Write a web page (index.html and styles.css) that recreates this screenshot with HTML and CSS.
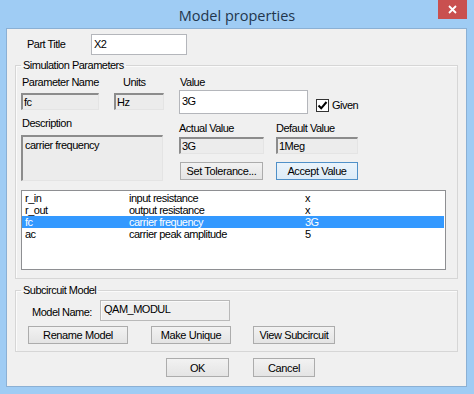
FILE: index.html
```html
<!DOCTYPE html>
<html>
<head>
<meta charset="utf-8">
<title>Model properties</title>
<link rel="stylesheet" href="styles.css">
</head>
<body>
<div class="titlebar">
  <span class="title">Model properties</span>
  <div class="close"><svg width="9" height="9" viewBox="0 0 9 9"><path d="M1 1 L8 8 M8 1 L1 8" stroke="#fff" stroke-width="1.8" fill="none"/></svg></div>
</div>
<div class="dialog">
  <div class="row-title">
    <span class="lbl-part">Part Title</span>
    <div class="edit part">X2</div>
  </div>
  <fieldset class="group sim">
    <legend>Simulation Parameters</legend>
    <div class="params">
      <div class="left">
        <div class="lab-row"><span class="l-pname">Parameter Name</span><span class="l-units">Units</span></div>
        <div class="field-row"><div class="sunk fc">fc</div><div class="sunk hz">Hz</div></div>
        <div class="l-desc">Description</div>
        <div class="sunk desc">carrier frequency</div>
      </div>
      <div class="right">
        <div class="l-value">Value</div>
        <div class="value-row">
          <div class="edit value">3G</div>
          <label class="given"><span class="check"><svg width="11" height="11" viewBox="0 0 11 11"><path d="M1.5 5.5 L4.2 8.3 L9.5 2" stroke="#000" stroke-width="2" fill="none"/></svg></span>Given</label>
        </div>
        <div class="pair labels"><span>Actual Value</span><span>Default Value</span></div>
        <div class="pair fields"><div class="sunk">3G</div><div class="sunk">1Meg</div></div>
        <div class="pair btns"><button class="btn tol">Set Tolerance...</button><button class="btn default">Accept Value</button></div>
      </div>
    </div>
    <div class="list">
      <div class="lrow"><span>r_in</span><span>input resistance</span><span>x</span></div>
      <div class="lrow"><span>r_out</span><span>output resistance</span><span>x</span></div>
      <div class="lrow sel"><span>fc</span><span>carrier frequency</span><span>3G</span></div>
      <div class="lrow"><span>ac</span><span>carrier peak amplitude</span><span>5</span></div>
    </div>
  </fieldset>
  <fieldset class="group sub">
    <legend>Subcircuit Model</legend>
    <div class="model-row">
      <span class="lbl-model">Model Name:</span>
      <div class="mname">QAM_MODUL</div>
    </div>
    <div class="sub-btns">
      <button class="btn rename">Rename Model</button>
      <button class="btn unique">Make Unique</button>
      <button class="btn view">View Subcircuit</button>
    </div>
  </fieldset>
  <div class="ok-row">
    <button class="btn ok">OK</button>
    <button class="btn cancel">Cancel</button>
  </div>
</div>
</body>
</html>
```

FILE: styles.css
```css
* { box-sizing: border-box; }
html, body { margin: 0; padding: 0; }
body {
  width: 474px;
  height: 394px;
  overflow: hidden;
  background: #9fccf4;
  font-family: "Liberation Sans", Arial, sans-serif;
  font-size: 11px;
  line-height: 13px;
  letter-spacing: -0.5px;
  color: #000;
}
.titlebar {
  height: 29px;
  position: relative;
  display: flex;
  justify-content: center;
  align-items: center;
}
.title {
  font-family: "Open Sans", "Noto Sans", sans-serif;
  font-size: 14.5px;
  letter-spacing: 0;
  color: #22364d;
  padding-top: 1px;
}
.close {
  position: absolute;
  top: 0;
  right: 7px;
  width: 29px;
  height: 19px;
  background: #c9504f;
  display: flex;
  align-items: center;
  justify-content: center;
}
.close svg { display: block; }
.dialog {
  margin-left: 7px;
  width: 459px;
  height: 357px;
  background: #f0f0f0;
  box-shadow: 0 0 0 1px #8bb0d4;
  padding-top: 5px;
}
.row-title { display: flex; height: 21px; align-items: center; }
.lbl-part { width: 84px; padding-left: 20px; }
.edit {
  background: #fff;
  border: 1px solid #b4b6bb;
  padding: 3px 2px 0;
  line-height: 13px;
}
.edit.part { width: 96px; height: 21px; }
.group {
  margin: 0 0 0 8px;
  width: 443px;
  min-width: 0;
  border: 1px solid #d6d6d6;
  box-shadow: inset 1px 1px 0 #fbfbfb;
  padding: 0 5px;
}
.group legend {
  padding: 0 2px;
  margin: 0;
  line-height: 13px;
}
.sim { margin-top: 4px; padding-top: 4px; padding-bottom: 8px; }
.params { display: flex; }
.left { width: 158px; flex: 0 0 158px; }
.lab-row, .field-row { display: grid; grid-template-columns: 93px 50px; }
.l-pname { padding-left: 1px; }
.l-units { padding-left: 9px; }
.field-row { margin-top: 4px; }
.sunk {
  background: #ececec;
  border-style: solid;
  border-width: 2px 1px 1px 2px;
  border-color: #8c8c8c #e4e4e4 #e4e4e4 #8c8c8c;
  height: 17px;
  padding: 1px 0 0 1px;
  line-height: 13px;
  white-space: nowrap;
}
.fc { width: 78px; }
.hz { width: 50px; }
.l-desc { margin-top: 7px; padding-left: 1px; }
.desc { margin-top: 5px; width: 142px; height: 46px; padding: 2px 0 0 2px; }
.right { flex: 1 1 auto; min-width: 0; }
.l-value { padding-left: 1px; }
.value-row { display: flex; margin-top: 1px; }
.edit.value { width: 129px; height: 24px; padding-top: 4px; }
.given { display: flex; align-items: center; margin-left: 8px; margin-top: 9px; height: 13px; gap: 3px; }
.check {
  width: 13px;
  height: 13px;
  background: #fff;
  border: 1px solid #333;
  display: flex;
  align-items: center;
  justify-content: center;
}
.check svg { display: block; }
.pair { display: grid; grid-template-columns: 85px 82px; column-gap: 12px; }
.pair.labels { margin-top: 8px; }
.pair.fields { margin-top: 2px; }
.pair.btns { margin-top: 8px; }
.btn {
  font-family: inherit;
  font-size: 11px;
  letter-spacing: -0.4px;
  color: #000;
  height: 18px;
  padding: 0;
  margin: 0;
  border: 1px solid #acacac;
  background: linear-gradient(#f2f2f2, #e4e4e4);
  line-height: 14px;
  white-space: nowrap;
}
.btn.tol { margin-left: 1px; width: 83px; }
.btn.default {
  width: 82px;
  border-color: #4f90c8;
  background: linear-gradient(#eaf3fb, #dcebf8);
}
.list {
  margin-top: 9px;
  width: 425px;
  height: 80px;
  background: #fff;
  border: 1px solid #8e8f92;
  padding: 1px 0 0 0;
}
.lrow {
  display: grid;
  grid-template-columns: 104px 176px 1fr;
  height: 12px;
  line-height: 12px;
  padding-left: 3px;
  margin-right: 1px;
  white-space: nowrap;
}
.lrow.sel { background: #3399ff; color: #fff; }
.sub { margin-top: 5px; padding-top: 3px; padding-bottom: 7px; }
.model-row { display: flex; align-items: center; height: 21px; }
.lbl-model { width: 79px; padding-left: 11px; padding-top: 4px; }
.mname {
  width: 130px;
  height: 21px;
  background: #efefef;
  border: 1px solid #b9b9b9;
  box-shadow: inset 1px 1px 0 #fafafa;
  padding: 2px 0 0 3px;
}
.sub-btns { display: flex; margin-top: 5px; padding-left: 7px; }
.btn.rename { width: 100px; }
.btn.unique { width: 80px; margin-left: 23px; }
.btn.view { width: 82px; margin-left: 22px; }
.ok-row { display: flex; margin-top: 6px; padding-left: 159px; }
.btn.ok { width: 63px; height: 19px; }
.btn.cancel { width: 62px; height: 19px; margin-left: 24px; }
```
